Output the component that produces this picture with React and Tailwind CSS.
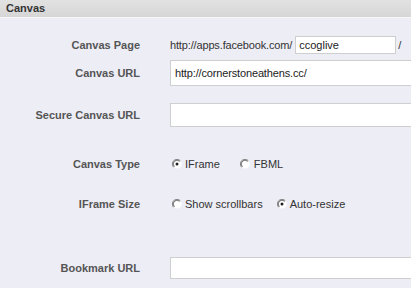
import React from "react";

function Radio({ checked }) {
  return (
    <svg width="10" height="10" viewBox="0 0 12 12" className="shrink-0">
      <circle cx="6" cy="6" r="5.5" fill="#ffffff" />
      <path d="M10 2 A5.5 5.5 0 0 0 2 10" fill="none" stroke="#8a8a8a" strokeWidth="1.2" />
      <path d="M9.2 2.8 A4.5 4.5 0 0 0 2.8 9.2" fill="none" stroke="#404040" strokeWidth="1" />
      {checked && <circle cx="6" cy="6" r="1.8" fill="#222" />}
    </svg>
  );
}

function Label({ children }) {
  return (
    <div className="w-[140px] shrink-0 text-right font-bold text-[11px] text-[#555555]">
      {children}
    </div>
  );
}

export default function App() {
  return (
    <div
      className="w-[411px] h-[288px] overflow-hidden bg-[#ededf5] text-[11px] text-[#333333]"
      style={{ fontFamily: "'Liberation Sans', Arial, sans-serif" }}
    >
      <div className="h-[18px] bg-gradient-to-b from-[#e2e2e2] to-[#d6d6d6] border-b border-[#f7f7f7] flex items-center pl-[6px] font-bold text-[11px] text-[#333333]">
        Canvas
      </div>

      <div className="flex items-center h-[18px] mt-[18px]">
        <Label>Canvas Page</Label>
        <div className="ml-[30px] flex items-center">
          <span className="whitespace-nowrap tracking-[-0.15px]">http://apps.facebook.com/</span>
          <div className="ml-[3px] w-[101px] h-[18px] bg-white border border-[#cfcfcf] flex items-center pl-[3px] text-[#222]">
            ccoglive
          </div>
          <span className="ml-[2px]">/</span>
        </div>
      </div>

      <div className="flex items-center h-[26px] mt-[6px]">
        <Label>Canvas URL</Label>
        <div className="ml-[30px] w-[260px] h-[26px] shrink-0 bg-white border border-[#cfcfcf] flex items-center pl-[4px] text-[#222] tracking-[-0.15px]">
          http://cornerstoneathens.cc/
        </div>
      </div>

      <div className="flex items-start h-[24px] mt-[17px]">
        <Label>
          <div className="mt-[4px]">Secure Canvas URL</div>
        </Label>
        <div className="ml-[30px] w-[260px] h-[24px] shrink-0 bg-white border border-[#cfcfcf]"></div>
      </div>

      <div className="flex items-center h-[16px] mt-[29px]">
        <Label>Canvas Type</Label>
        <div className="ml-[32px] flex items-center">
          <Radio checked />
          <span className="ml-[3px]">IFrame</span>
          <span className="ml-[20px] flex"><Radio /></span>
          <span className="ml-[4px]">FBML</span>
        </div>
      </div>

      <div className="flex items-center h-[16px] mt-[24px]">
        <Label>IFrame Size</Label>
        <div className="ml-[32px] flex items-center">
          <Radio />
          <span className="ml-[3px]">Show scrollbars</span>
          <span className="ml-[14px] flex"><Radio checked /></span>
          <span className="ml-[3px]">Auto-resize</span>
        </div>
      </div>

      <div className="flex items-center h-[22px] mt-[45px]">
        <Label>Bookmark URL</Label>
        <div className="ml-[30px] w-[260px] h-[22px] shrink-0 bg-white border border-[#cfcfcf]"></div>
      </div>
    </div>
  );
}
